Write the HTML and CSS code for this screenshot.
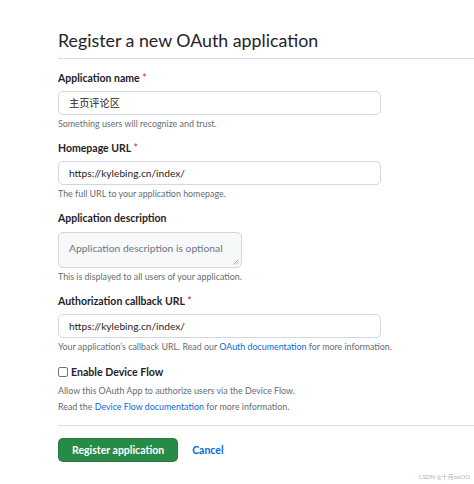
FILE: index.html
```html
<!DOCTYPE html>
<html lang="en">
<head>
  <meta charset="UTF-8" />
  <title>Register a new OAuth application</title>
  <meta name="viewport" content="width=device-width, initial-scale=1.0" />
  <link rel="stylesheet" href="styles.css">
</head>
<body>
  <main class="page">
    <h1 class="page-title">Register a new OAuth application</h1>

    <form class="oauth-form">
      <div class="form-group">
        <label class="form-label">Application name <span class="req">*</span></label>
        <div class="form-input">主页评论区</div>
        <p class="note">Something users will recognize and trust.</p>
      </div>

      <div class="form-group">
        <label class="form-label">Homepage URL <span class="req">*</span></label>
        <div class="form-input">https://kylebing.cn/index/</div>
        <p class="note">The full URL to your application homepage.</p>
      </div>

      <div class="form-group">
        <label class="form-label">Application description</label>
        <div class="form-textarea">
          Application description is optional
          <svg class="grip" width="6" height="6" viewBox="0 0 6 6">
            <path d="M0.5 5.5 L5.5 0.5 M3 5.5 L5.5 3" stroke="#8c959f" stroke-width="0.8" fill="none"/>
          </svg>
        </div>
        <p class="note">This is displayed to all users of your application.</p>
      </div>

      <div class="form-group">
        <label class="form-label">Authorization callback URL <span class="req">*</span></label>
        <div class="form-input">https://kylebing.cn/index/</div>
        <p class="note">Your application’s callback URL. Read our <a href="#">OAuth documentation</a> for more information.</p>
      </div>

      <div class="device-flow">
        <label class="check-row"><span class="checkbox"></span>Enable Device Flow</label>
        <p class="note">Allow this OAuth App to authorize users via the Device Flow.</p>
        <p class="note">Read the <a href="#">Device Flow documentation</a> for more information.</p>
      </div>

      <div class="form-actions">
        <button type="button" class="btn-primary">Register application</button>
        <a href="#" class="cancel">Cancel</a>
      </div>
    </form>
  </main>

  <span class="watermark">CSDN @十月ooOO</span>
</body>
</html>
```

FILE: styles.css
```css
:root {
  --fg: #1f2328;
  --muted: #656d76;
  --border: #d0d7de;
  --link: #0969da;
  --green: #288a47;
  --font: Lato, "Noto Sans CJK SC", sans-serif;
}

* {
  box-sizing: border-box;
}

body {
  margin: 0;
  background: #ffffff;
  color: var(--fg);
  font-family: var(--font);
}

.page {
  padding: 28px 0 0 58px;
}

.page-title {
  margin: 0;
  padding-bottom: 6px;
  font-size: 17.8px;
  line-height: 24px;
  font-weight: 400;
  border-bottom: 1px solid #d8dee4;
}

.oauth-form {
  padding-top: 11px;
}

.form-group {
  margin-bottom: 9px;
}

.form-label {
  display: block;
  font-size: 10.5px;
  line-height: 16px;
  font-weight: 700;
}

.req {
  color: #d1242f;
  font-weight: 400;
}

.form-input {
  width: 323px;
  height: 24px;
  margin-top: 5px;
  padding: 0 10px;
  border: 1px solid var(--border);
  border-radius: 5px;
  font-size: 10.2px;
  line-height: 22px;
}

.form-textarea {
  position: relative;
  width: 184px;
  height: 36px;
  margin-top: 6px;
  padding: 0 10px;
  border: 1px solid var(--border);
  border-radius: 5px;
  background: #f6f8fa;
  color: #6e7781;
  font-size: 10.3px;
  line-height: 30px;
  white-space: nowrap;
}

.grip {
  position: absolute;
  right: 2px;
  bottom: 2px;
}

.note {
  margin: 2px 0 0;
  font-size: 8.9px;
  line-height: 14px;
  color: var(--muted);
}

.note a {
  color: var(--link);
  text-decoration: none;
}

.device-flow {
  padding-top: 1px;
}

.check-row {
  display: flex;
  align-items: center;
  gap: 3px;
  font-size: 10.6px;
  line-height: 16px;
  font-weight: 700;
}

.checkbox {
  width: 10px;
  height: 10px;
  border: 1px solid #6e7781;
  border-radius: 2px;
}

.device-flow .note {
  margin-top: 4px;
}

.device-flow .note + .note {
  margin-top: 2px;
}

.form-actions {
  display: flex;
  align-items: center;
  gap: 14px;
  margin-top: 11px;
  padding-top: 12px;
  border-top: 1px solid #d8dee4;
}

.btn-primary {
  height: 24px;
  padding: 0 13px;
  border: 1px solid rgba(31, 35, 40, 0.15);
  border-radius: 5px;
  background: var(--green);
  color: #ffffff;
  font-family: var(--font);
  font-size: 10.5px;
  font-weight: 700;
}

.cancel {
  color: var(--link);
  font-size: 10.5px;
  font-weight: 700;
  text-decoration: none;
}

.watermark {
  position: absolute;
  right: 4px;
  bottom: 3px;
  font-size: 6px;
  color: #b0b0b0;
}
```
